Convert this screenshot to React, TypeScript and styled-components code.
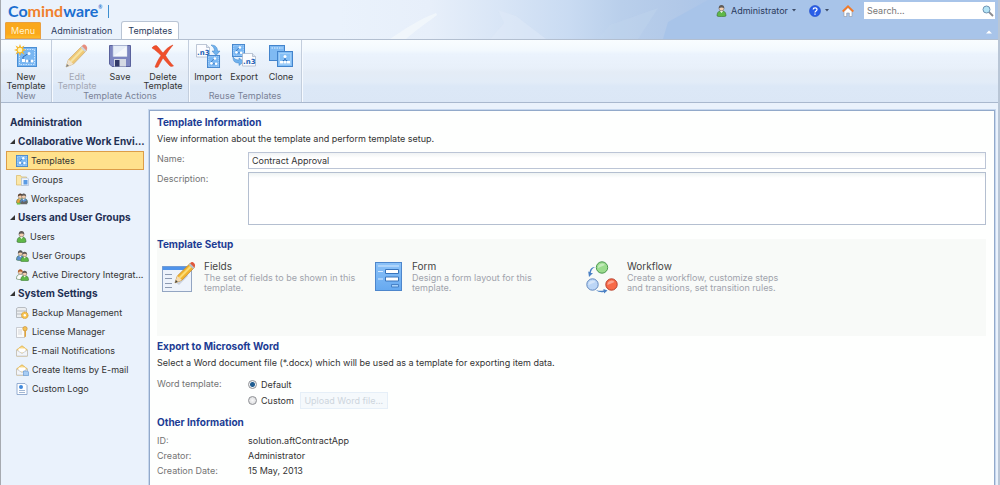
import React, { ReactNode, useState } from "react";
import styled, { createGlobalStyle } from "styled-components";

const Global = createGlobalStyle`
  * { box-sizing: border-box; }
  body { margin: 0; background: #eaf2fc; }
  body, button, input, textarea {
    font-family: Inter, Verdana, sans-serif;
    font-size: 9px;
    line-height: 11px;
    color: #333;
  }
  button { border: 0; padding: 0; background: none; cursor: pointer; }
  svg { display: block; flex: none; }
  h1, h2, h3, p, ul, dl, dd { margin: 0; padding: 0; }
`;

/* ---------- page frame ---------- */

const Page = styled.div`
  display: flex;
  flex-direction: column;
  min-height: 100vh;
  border-left: 1px solid #a6aab0;
  border-right: 2px solid #b9c6d6;
  background: #eaf2fc;
`;

const Header = styled.header`
  position: relative;
  display: flex;
  flex-direction: column;
  background: #eaf2fc;
`;

const HeaderArt = styled.svg`
  position: absolute;
  top: 0;
  right: 0;
  height: 100%;
`;

const TopBar = styled.div`
  position: relative;
  display: flex;
  justify-content: space-between;
  height: 22px;
  padding: 2px 3px 0 7px;
`;

const Brand = styled.div`
  display: flex;
  align-items: center;
  gap: 6px;
  height: 18px;
`;

const Logo = styled.a`
  display: flex;
  font-family: Lato, sans-serif;
  font-size: 16px;
  line-height: 18px;
  font-weight: 700;
  color: #1b6fd0;
  text-decoration: none;
`;

const LogoAccent = styled.span`
  color: #f0812c;
`;

const LogoMark = styled.span`
  font-size: 5px;
  line-height: 10px;
`;

const BrandRule = styled.span`
  width: 1px;
  height: 13px;
  background: #3d8fd0;
`;

const Account = styled.div`
  display: flex;
  align-items: center;
  gap: 13px;
  height: 17px;
`;

const AccountButton = styled.button`
  display: flex;
  align-items: center;
  gap: 4px;
  color: #2a3a5c;
`;

const SearchBox = styled.label`
  display: flex;
  align-items: center;
  width: 131px;
  height: 17px;
  padding: 0 1px 0 3px;
  margin-left: -3px;
  background: #fff;
`;

const SearchInput = styled.input`
  flex: 1;
  min-width: 0;
  border: 0;
  padding: 0;
  background: none;
  outline: none;
  &::placeholder { color: #777; opacity: 1; }
`;

const TabBar = styled.nav`
  position: relative;
  display: flex;
  align-items: flex-end;
  gap: 4px;
  height: 17px;
  padding: 0 6px 0 4px;
`;

const Tab = styled.button<{ $kind?: "menu" | "active" }>`
  height: 17px;
  padding: 0 6px;
  border-radius: 2px 2px 0 0;
  color: ${(p) => (p.$kind === "menu" ? "#fff4cc" : "#2c3a5c")};
  background: ${(p) =>
    p.$kind === "menu"
      ? "linear-gradient(#f9a81e, #fba81a 70%, #fdc02c)"
      : p.$kind === "active"
      ? "#fff"
      : "none"};
  box-shadow: ${(p) =>
    p.$kind === "active" ? "0 0 0 1px #b9c4d4" : p.$kind === "menu" ? "inset 0 0 0 1px #e9a040" : "none"};
`;

const TabSpacer = styled.div`
  flex: 1;
`;

const Collapse = styled.button`
  height: 17px;
  padding-top: 3px;
`;

/* ---------- ribbon ---------- */

const Ribbon = styled.div`
  position: relative;
  display: flex;
  height: 64px;
  border-top: 1px solid #b3bfd0;
  border-bottom: 1px solid #a9b8ce;
  background: linear-gradient(#f9fdff 0, #f3f9fe 10px, #ebf3fd 14px, #e8f0fa 28px, #e4ecf6 32px, #e2ecf8 42px, #dce8f7 46px, #dbe7f6 100%);
`;

const RibbonGroup = styled.section`
  display: flex;
  flex-direction: column;
  border-right: 1px solid #c3cedd;
  box-shadow: 1px 0 0 #f6faff;
`;

const RibbonTools = styled.div`
  display: flex;
  height: 49px;
  padding: 4px 1px 0;
`;

const Tool = styled.button<{ $width: number }>`
  display: flex;
  flex-direction: column;
  align-items: center;
  gap: 4px;
  width: ${(p) => p.$width}px;
  line-height: 9px;
  &:disabled { color: #a3a7b3; }
  &:disabled svg { opacity: 0.65; }
`;

const GroupName = styled.h3`
  font-size: 9px;
  line-height: 13px;
  font-weight: 400;
  text-align: center;
  color: #7a8296;
`;

/* ---------- body ---------- */

const Body = styled.div`
  display: flex;
  flex: 1;
  padding: 7px 3px 0 0;
`;

const Sidebar = styled.nav`
  width: 148px;
  padding: 3px 5px 0;
`;

const SideTitle = styled.h2`
  padding-left: 4px;
  font-size: 10px;
  line-height: 19px;
  color: #1f3054;
`;

const SideHeading = styled.button`
  display: flex;
  align-items: center;
  gap: 3px;
  width: 100%;
  height: 19px;
  padding: 0 0 0 4px;
  font-size: 10px;
  font-weight: 700;
  color: #1f3054;
`;

const Label = styled.span`
  white-space: nowrap;
`;

const SideList = styled.ul`
  list-style: none;
`;

const SideLink = styled.a<{ $active?: boolean }>`
  display: flex;
  align-items: center;
  gap: 3px;
  height: 19px;
  padding: 0 0 0 9px;
  border: 1px solid ${(p) => (p.$active ? "#dc9d48" : "transparent")};
  background: ${(p) => (p.$active ? "#ffe18c" : "none")};
  color: #333;
  text-decoration: none;
`;

const Panel = styled.main`
  flex: 1;
  min-width: 0;
  padding: 6px 8px 8px 7px;
  border: 1px solid #92a9ca;
  border-bottom: 0;
  background: #fefffe;
  box-shadow: 0 0 0 1px #c6d7ee;
`;

const Heading = styled.h2`
  font-size: 10px;
  line-height: 11px;
  color: #1c3c94;
`;

const Lead = styled.p`
  padding: 5px 0;
`;

const Field = styled.div`
  display: grid;
  grid-template-columns: 91px minmax(0, 1fr);
  margin: 3px 0;
`;

const FieldLabel = styled.label`
  padding-top: 1px;
  color: #747474;
`;

const TextInput = styled.input`
  width: 100%;
  height: 17px;
  padding: 0 3px;
  border: 1px solid #bcc5d6;
  background: linear-gradient(#f0f3f4, #fff 5px);
`;

const TextArea = styled.textarea`
  display: block;
  width: 100%;
  height: 53px;
  padding: 4px;
  border: 1px solid #b4bfd0;
  background: linear-gradient(#eef3f3, #fff 5px);
  resize: none;
`;

const Setup = styled.section`
  height: 97px;
  margin: 14px 0 5px;
  background: #f8faf8;
`;

const SetupCards = styled.div`
  display: flex;
  padding: 10px 4px 0;
`;

const Card = styled.a`
  display: flex;
  gap: 8px;
  width: 212px;
  color: #a0a3ac;
  line-height: 10px;
  text-decoration: none;
`;

const CardText = styled.span`
  display: flex;
  flex-direction: column;
  width: 156px;
`;

const CardTitle = styled.span`
  font-size: 10px;
  line-height: 13px;
  color: #444;
`;

const WordField = styled.fieldset`
  display: grid;
  grid-template-columns: 91px minmax(0, 1fr);
  margin: 0 0 9px;
  padding: 3px 0 0;
  border: 0;
`;

const FieldCaption = styled.span`
  line-height: 16px;
  color: #747474;
`;

const Choice = styled.div`
  display: flex;
  align-items: center;
  height: 16px;
`;

const RadioLabel = styled.label`
  display: flex;
  align-items: center;
  gap: 4px;
`;

const Radio = styled.input`
  appearance: none;
  width: 9px;
  height: 9px;
  margin: 0;
  border: 1px solid #8e9094;
  border-radius: 50%;
  background: radial-gradient(#f8f8f8, #d4d6d8);
  &:checked { background: radial-gradient(circle, #1f5c90 0 2px, #f2f5f8 3px); }
`;

const Upload = styled.button`
  width: 88px;
  height: 17px;
  margin-left: 6px;
  border: 1px solid #e6eff8;
  background: #f5f9fc;
  color: #cdd5dd;
`;

const Facts = styled.dl`
  display: grid;
  grid-template-columns: 91px minmax(0, 1fr);
  padding-top: 5px;
  line-height: 15px;
`;

const FactName = styled.dt`
  color: #747474;
`;

/* ---------- drawings ---------- */

const Svg = ({ w, h, box, children }: { w: number; h?: number; box: string; children: ReactNode }) => (
  <svg width={w} height={h ?? w} viewBox={box} aria-hidden="true">{children}</svg>
);

/* blue tile with a small diagram, reused by several icons; 14 units wide */
const Tile = ({ x, y, s = 1 }: { x: number; y: number; s?: number }) => (
  <g transform={`translate(${x} ${y}) scale(${s})`}>
    <rect x=".5" y=".5" width="13" height="13" fill="#79b7f3" stroke="#4384cc" />
    <rect x="1.8" y="1.8" width="10.4" height="10.4" fill="none" stroke="#d9ecff" strokeWidth=".6" strokeDasharray="1 1" />
    <path d="M8.5 3.5 5 6.5v3h4" fill="none" stroke="#2a68b4" strokeWidth=".8" />
    <circle cx="8.5" cy="3.8" r="1.4" fill="#fff" />
    <circle cx="4.8" cy="9" r="1.4" fill="#fff" />
    <circle cx="9.8" cy="9.4" r="1.4" fill="#fff" />
  </g>
);

const NewIcon = () => (
  <Svg w={24} box="0 0 24 24">
    <g transform="translate(3 3)">
      <rect x=".5" y=".5" width="19" height="19" fill="#78b6f2" stroke="#4a8ed4" />
      <rect x="2.5" y="2.5" width="15" height="15" fill="none" stroke="#dceeff" strokeDasharray="1.5 1" strokeWidth=".8" />
      <path d="M12 6 6 10v4h8" fill="none" stroke="#2e6cb8" />
      <circle cx="12" cy="6.5" r="1.5" fill="#fff" />
      <rect x="5" y="12" width="3" height="3" fill="#fff" />
      <circle cx="10" cy="14" r="1.5" fill="#fff" />
      <circle cx="15" cy="14" r="1.5" fill="#fff" />
    </g>
    <path d="M6 0l1.200 3.200L10.500 1.500 8.800 4.800 12 6 8.800 7.200l1.700 3.300-3.300-1.700L6 12 4.800 8.800 1.500 10.500l1.700-3.300L0 6l3.200-1.200L1.500 1.500l3.300 1.700z" fill="#f7b92c" />
    <circle cx="6" cy="6" r="2.300" fill="#fff6b8" />
  </Svg>
);

const Pencil = ({ transform }: { transform?: string }) => (
  <g transform={transform}>
    <path d="M1 23 3.500 15.500 17 2l4.500 4.500L8.500 20z" fill="#f2b32e" stroke="#b9822a" strokeWidth=".7" />
    <path d="M5 17 18 3.500l1.500 1.500L6.500 18.500z" fill="#fcdc74" />
    <path d="M1 23l2.500-7.500 5 4.500z" fill="#f4dcb4" />
    <path d="M1 23l1-3 2 1.800z" fill="#444" />
    <path d="M15.500 3.500 17 2l4.500 4.500L20 8z" fill="#b8c0cc" />
    <path d="M17 2c1-1.500 2.500-2 4-.5s1.500 3.500.5 5z" fill="#e0553c" />
  </g>
);

const EditIcon = () => <Svg w={24} box="0 0 24 24"><Pencil /></Svg>;

const SaveIcon = () => (
  <Svg w={24} box="0 0 24 24">
    <path d="M1.500 1.500h21v21H4l-2.500-2.500z" fill="#7d86c0" stroke="#5a629c" />
    <rect x="5" y="1.500" width="14" height="11" fill="#e6eef8" stroke="#aebbd6" strokeWidth=".6" />
    <path d="M5 12.500 19 2v10.500z" fill="#fff" opacity=".6" />
    <rect x="6" y="15" width="12" height="7.500" fill="#d4d9e4" />
    <rect x="7" y="16" width="4.500" height="6.500" fill="#323a68" />
  </Svg>
);

const DeleteIcon = () => (
  <Svg w={24} box="0 0 24 24">
    <path d="M1 4c1-2 4-3 5-2 3 3 4 5 6 7 3-4 6-6.500 10-8-3 3.500-5.500 7-7.500 10.500 2 3.500 4.500 6.500 8 10.500-1.500.5-3 .5-3.500 0-3-3-5-5.500-7-8-2 3.500-3.500 6-5 9-1 .5-2.500.5-3 0 1.500-4 3.500-8 6-11.500C7 8.500 4.500 6 1 4z" fill="#f0502c" stroke="#d83c1c" strokeWidth=".5" />
  </Svg>
);

const N3Sheet = ({ x, y }: { x: number; y: number }) => (
  <g transform={`translate(${x} ${y})`}>
    <path d="M.5.5h10l3 3v9.500H.5z" fill="#fbfcff" stroke="#a4b0c4" strokeWidth=".7" />
    <path d="M10.500.5v3h3" fill="#dbe3ef" stroke="#a4b0c4" strokeWidth=".7" />
    <text x="1" y="10.500" fontSize="7" fontWeight="700" fill="#235fb4" fontFamily="DejaVu Sans, sans-serif">.n3</text>
  </g>
);

const ImportIcon = () => (
  <Svg w={26} h={24} box="0 0 26 24">
    <N3Sheet x={1} y={0} />
    <path d="M16 1c5 0 6.500 3 6.500 6H25l-4 4.500L17 7h2.500c0-2.500-1-4-3.500-6z" fill="#6fb2ee" stroke="#3f83c6" strokeWidth=".5" />
    <Tile x={12} y={11} s={0.93} />
  </Svg>
);

const ExportIcon = () => (
  <Svg w={26} h={24} box="0 0 26 24">
    <Tile x={1} y={0} s={0.93} />
    <path d="M2 13c0 4.500 2 6 6 6v2.500L13 17.500 8 14v2c-3 0-4.500-1-6-3z" fill="#6fb2ee" stroke="#3f83c6" strokeWidth=".5" />
    <N3Sheet x={11} y={9} />
  </Svg>
);

const CloneIcon = () => (
  <Svg w={24} box="0 0 24 24">
    <rect x=".5" y="1.500" width="15" height="15" fill="#7fbaf3" stroke="#4384cc" />
    <path d="M2.500 4h11" stroke="#e4f2ff" strokeDasharray="1.500 1" />
    <rect x="8.500" y="7.500" width="15" height="15" fill="#84bff6" stroke="#4384cc" />
    <rect x="10.500" y="9.500" width="11" height="11" fill="none" stroke="#e4f2ff" strokeDasharray="1 1" strokeWidth=".6" />
    <path d="M16 12.500v3M12.500 18l3.500-2.500 3.500 2.500" fill="none" stroke="#2a68b4" />
    <circle cx="16" cy="12.500" r="1.500" fill="#fff" />
    <path d="M11 17h3v2.500h-3zM14.500 17h3v2.500h-3zM18 17h3v2.500h-3z" fill="#fff" />
  </Svg>
);

const Person = ({ x = 0, y = 0, body = "#5fb848", hair = "#5e5a58" }) => (
  <g transform={`translate(${x} ${y})`}>
    <path d="M.5 11c0-3 1-4.500 3-5h3c2 .5 3 2 3 5-2 1-7 1-9 0z" fill={body} stroke="#3c6c38" strokeWidth=".6" />
    <path d="M3.500 6 5 8l1.500-2z" fill="#fff" />
    <circle cx="5" cy="3.300" r="2.500" fill="#f4d0b0" stroke="#77695c" strokeWidth=".5" />
    <path d="M2.300 3.500C2 1 3.500 0 5 0s3 1 2.700 3.500C6.500 2 4 2 2.300 3.500z" fill={hair} />
  </g>
);

const UserIcon = () => <Svg w={11} h={12} box="0 0 10 12"><Person /></Svg>;

const PairIcon = ({ body, hair }: { body: string; hair: string }) => (
  <Svg w={13} h={12} box="0 0 15 13">
    <Person body={body} hair={hair} />
    <Person x={5} y={1.5} />
  </Svg>
);

const WorkspacesIcon = () => (
  <Svg w={12} box="0 0 14 13">
    <Person x={0} y={0} body="#e8a23c" hair="#5b4130" />
    <Person x={4} y={0} body="#5c8fd0" />
    <path d="M5 12.500 7 8l2 2 4-2v4.500z" fill="#666" />
    <path d="M1 11h4v2H1z" fill="#6cc04a" />
  </Svg>
);

const TemplatesIcon = () => <Svg w={12} box="0 0 14 14"><Tile x={0} y={0} /></Svg>;

const FolderIcon = () => (
  <Svg w={13} h={12} box="0 0 13 12">
    <path d="M.5 1.500h4l1 1.500h5v8H.5z" fill="#fbe7a8" stroke="#d8b864" strokeWidth=".7" />
    <path d="M5.500 4h6l1 1v6.500h-7z" fill="#eef4fc" stroke="#9db4d4" strokeWidth=".6" />
    <path d="M7.500 6h4v4.500h-4z" fill="#5a9be4" />
  </Svg>
);

const BackupIcon = () => (
  <Svg w={13} h={12} box="0 0 13 12">
    <path d="M.5 1.500 2 .5h7l1.500 1v9H.5z" fill="#eceef0" stroke="#a2a6ac" strokeWidth=".7" />
    <path d="M1 4h9M1 7h6" stroke="#a8acb2" strokeWidth=".8" />
    <circle cx="8.800" cy="8.300" r="3.300" fill="#f6c350" stroke="#cf8e22" strokeWidth=".7" strokeDasharray="1.500 .5" />
    <circle cx="8.800" cy="8.300" r="1.200" fill="#fff" />
  </Svg>
);

const LicenseIcon = () => (
  <Svg w={13} h={12} box="0 0 13 12">
    <path d="M.5 1.500h8v10h-8z" fill="#fbfbfb" stroke="#b9bcc2" strokeWidth=".7" />
    <path d="M2 4h4M2 6h4M2 8h4" stroke="#c4c8d0" strokeWidth=".7" />
    <circle cx="9" cy="2.700" r="2.200" fill="#f3c258" stroke="#c68a28" strokeWidth=".6" />
    <path d="M8.500 4.500h1.500v6l-1.500 1z" fill="#e3a63c" />
  </Svg>
);

const MailIcon = ({ extra }: { extra?: boolean }) => (
  <Svg w={13} h={12} box="0 0 13 12">
    <path d="M.5 5 6 .8 11.500 5v6H.5z" fill="#fbdc8c" stroke="#dca93c" strokeWidth=".8" />
    <path d="M2.500 3.500h7v4h-7z" fill="#fff" />
    <path d="M.5 11V5L6 8.500 11.500 5v6z" fill="#f3f5f9" stroke="#b4bac6" strokeWidth=".6" />
    {extra && <path d="M7.500 7h4l1 1v3.700h-5z" fill="#a8cdf4" stroke="#5a8fce" strokeWidth=".6" />}
  </Svg>
);

const LogoDocIcon = () => (
  <Svg w={13} h={12} box="0 0 13 12">
    <path d="M1 .5h8l2 2v9H1z" fill="#fdfeff" stroke="#7f9cc6" strokeWidth=".8" />
    <circle cx="5" cy="4" r="2" fill="#3f88dc" />
    <path d="M3 7.500h6M3 9.500h6" stroke="#8aa4c8" strokeWidth=".8" />
  </Svg>
);

const FieldsIcon = () => (
  <Svg w={35} h={34} box="0 0 35 34">
    <rect x="1.500" y="6.500" width="29" height="25" fill="#eef3fb" stroke="#93a5c2" />
    <rect x="1.500" y="6.500" width="29" height="3.500" fill="#4f93ea" />
    <path d="M4 14.500h7M4 18.500h7M4 23.500h7M4 27.500h7" stroke="#8d9ab0" />
    <path d="M14 22 24 12l3 4-9 9z" fill="#a8b2c4" opacity=".5" />
    <Pencil transform="translate(13 1.500) scale(.95 .93)" />
  </Svg>
);

const FormIcon = () => (
  <Svg w={31} h={34} box="0 0 31 34">
    <defs>
      <linearGradient id="form" x2="0" y2="1">
        <stop stopColor="#8cc2f8" /><stop offset="1" stopColor="#66a9f0" />
      </linearGradient>
    </defs>
    <rect x="2.500" y="2.500" width="26" height="28" fill="url(#form)" stroke="#4d86cc" />
    <path d="M5 6h21" stroke="#d6eaff" />
    <path d="M5 11.500h5M5 19h5" stroke="#d6eaff" />
    <path d="M12.500 9.500h13v4h-13zM12.500 17h13v4h-13z" fill="#fff" stroke="#3874bc" />
    <path d="M18.500 24.500h7v2.500h-7z" fill="#a8d2fb" stroke="#3874bc" strokeWidth=".8" />
  </Svg>
);

const WorkflowIcon = () => (
  <Svg w={34} box="0 0 34 34">
    <path d="M10 7c-3 1.500-4 4-4.200 6H8l-4 4-.8-5.500 1.300.5C5 9 7 6.500 10 7z" fill="#4b80c4" />
    <path d="M11 30c3 1 5 1 7.500.5V29l4 1.500-3.500 3v-1.500c-3 .5-6 0-8-2z" fill="#4b80c4" />
    <circle cx="17" cy="7.500" r="5.700" fill="#9bdc8e" stroke="#4c9850" />
    <circle cx="7.500" cy="24.500" r="5.700" fill="#bcd6f6" stroke="#6388be" />
    <circle cx="26.500" cy="24.500" r="5.700" fill="#f86a48" stroke="#b8402c" />
    <path d="M13 8a4 4 0 0 1 7-3zM3.500 25a4 4 0 0 1 7-3zM22.500 25a4 4 0 0 1 7-3z" fill="#fff" opacity=".4" />
  </Svg>
);

const Caret = () => <Svg w={4} h={3} box="0 0 4 3"><path d="M0 0h4L2 2.500z" fill="#3c4a66" /></Svg>;

const OpenMark = () => <Svg w={5} box="0 0 5 5"><path d="M5 0v5H0z" fill="#333" /></Svg>;

const HelpIcon = () => (
  <Svg w={12} box="0 0 12 12">
    <circle cx="6" cy="6" r="5.500" fill="#2a5ee8" stroke="#1f4cc8" strokeWidth=".6" />
    <path d="M4.200 4.600C4.200 2.300 8 2.300 8 4.500 8 6 6 5.900 6 7.400M6 8.500v1.300" fill="none" stroke="#fff" strokeWidth="1.300" />
  </Svg>
);

const HomeIcon = () => (
  <Svg w={12} box="0 0 12 12">
    <path d="M2 6.500 6 2.500l4 4v5H7.300V8H4.700v3.500H2z" fill="#fff" stroke="#8d95a2" strokeWidth=".6" />
    <path d="M.7 6.500 6 1.300l5.300 5.200" fill="none" stroke="#f27a28" strokeWidth="1.800" />
  </Svg>
);

const SearchIcon = () => (
  <Svg w={12} box="0 0 12 12">
    <path d="m7 7 4 4" stroke="#8a8a90" strokeWidth="1.800" />
    <circle cx="4.500" cy="4.500" r="3.500" fill="#b4e4f6" stroke="#6f94b4" />
  </Svg>
);

/* ---------- content ---------- */

type NavItem = { name: string; icon: ReactNode; active?: boolean };

const navigation: { title: string; items: NavItem[] }[] = [
  {
    title: "Collaborative Work Envi...",
    items: [
      { name: "Templates", icon: <TemplatesIcon />, active: true },
      { name: "Groups", icon: <FolderIcon /> },
      { name: "Workspaces", icon: <WorkspacesIcon /> },
    ],
  },
  {
    title: "Users and User Groups",
    items: [
      { name: "Users", icon: <UserIcon /> },
      { name: "User Groups", icon: <PairIcon body="#5c8fd0" hair="#555" /> },
      { name: "Active Directory Integrat...", icon: <PairIcon body="#fbfbfb" hair="#b4602c" /> },
    ],
  },
  {
    title: "System Settings",
    items: [
      { name: "Backup Management", icon: <BackupIcon /> },
      { name: "License Manager", icon: <LicenseIcon /> },
      { name: "E-mail Notifications", icon: <MailIcon /> },
      { name: "Create Items by E-mail", icon: <MailIcon extra /> },
      { name: "Custom Logo", icon: <LogoDocIcon /> },
    ],
  },
];

type ToolItem = { label: ReactNode; icon: ReactNode; width: number; disabled?: boolean };

const ribbon: { title: string; tools: ToolItem[] }[] = [
  { title: "New", tools: [{ label: <>New<br />Template</>, icon: <NewIcon />, width: 48 }] },
  {
    title: "Template Actions",
    tools: [
      { label: <>Edit<br />Template</>, icon: <EditIcon />, width: 48, disabled: true },
      { label: "Save", icon: <SaveIcon />, width: 38 },
      { label: <>Delete<br />Template</>, icon: <DeleteIcon />, width: 48 },
    ],
  },
  {
    title: "Reuse Templates",
    tools: [
      { label: "Import", icon: <ImportIcon />, width: 36 },
      { label: "Export", icon: <ExportIcon />, width: 36 },
      { label: "Clone", icon: <CloneIcon />, width: 38 },
    ],
  },
];

const cards = [
  { title: "Fields", text: "The set of fields to be shown in this template.", icon: <FieldsIcon /> },
  { title: "Form", text: "Design a form layout for this template.", icon: <FormIcon /> },
  { title: "Workflow", text: "Create a workflow, customize steps and transitions, set transition rules.", icon: <WorkflowIcon /> },
];

export default function App() {
  const [word, setWord] = useState("default");
  return (
    <>
      <Global />
      <Page>
        <Header>
          <HeaderArt width="660" viewBox="0 0 660 39" preserveAspectRatio="xMaxYMid slice" aria-hidden="true">
            <defs>
              <linearGradient id="sky">
                <stop stopColor="#eaf2fc" />
                <stop offset=".14" stopColor="#e7effa" />
                <stop offset=".25" stopColor="#d8e5f6" />
                <stop offset=".35" stopColor="#c9dbf2" />
                <stop offset=".43" stopColor="#b9cfeb" />
                <stop offset=".52" stopColor="#b1c8e8" />
                <stop offset=".59" stopColor="#a8c4e9" />
                <stop offset="1" stopColor="#a8c4e9" />
              </linearGradient>
            </defs>
            <rect width="660" height="39" fill="url(#sky)" />
            <path d="M52 39C68 28 82 19 98 13l1 2C90 22 78 30 68 39z" fill="#f3f8fb" opacity=".8" />
            <path d="M160 10 178 16l30 23h-56l14-16z" fill="#e0eaf7" opacity=".5" />
            <path d="M320 8 300 39h-40l12-14z" fill="#c4d6ee" opacity=".35" />
            <path d="M370 0 330 22l-5 17h335V0z" fill="#a8c4e9" />
          </HeaderArt>
          <TopBar>
            <Brand>
              <Logo href="#">Co<LogoAccent>mind</LogoAccent>ware<LogoMark>®</LogoMark></Logo>
              <BrandRule />
            </Brand>
            <Account>
              <AccountButton><UserIcon />Administrator<Caret /></AccountButton>
              <AccountButton aria-label="Help"><HelpIcon /><Caret /></AccountButton>
              <AccountButton aria-label="Home"><HomeIcon /></AccountButton>
              <SearchBox>
                <SearchInput type="search" placeholder="Search..." aria-label="Search" />
                <SearchIcon />
              </SearchBox>
            </Account>
          </TopBar>
          <TabBar>
            <Tab $kind="menu">Menu</Tab>
            <Tab>Administration</Tab>
            <Tab $kind="active">Templates</Tab>
            <TabSpacer />
            <Collapse aria-label="Collapse ribbon">
              <Svg w={6} h={4} box="0 0 6 4"><path d="M0 3.500h6L3 .5z" fill="#fff" /></Svg>
            </Collapse>
          </TabBar>
        </Header>

        <Ribbon>
          {ribbon.map((group) => (
            <RibbonGroup key={group.title}>
              <RibbonTools>
                {group.tools.map((tool, i) => (
                  <Tool key={i} $width={tool.width} disabled={tool.disabled}>
                    {tool.icon}
                    <span>{tool.label}</span>
                  </Tool>
                ))}
              </RibbonTools>
              <GroupName>{group.title}</GroupName>
            </RibbonGroup>
          ))}
        </Ribbon>

        <Body>
          <Sidebar>
            <SideTitle>Administration</SideTitle>
            {navigation.map((section) => (
              <div key={section.title}>
                <SideHeading><OpenMark /><Label>{section.title}</Label></SideHeading>
                <SideList>
                  {section.items.map((item) => (
                    <li key={item.name}>
                      <SideLink href="#" $active={item.active}>{item.icon}<Label>{item.name}</Label></SideLink>
                    </li>
                  ))}
                </SideList>
              </div>
            ))}
          </Sidebar>

          <Panel>
            <Heading>Template Information</Heading>
            <Lead>View information about the template and perform template setup.</Lead>
            <Field>
              <FieldLabel htmlFor="name">Name:</FieldLabel>
              <TextInput id="name" defaultValue="Contract Approval" />
            </Field>
            <Field>
              <FieldLabel htmlFor="description">Description:</FieldLabel>
              <TextArea id="description" />
            </Field>

            <Setup>
              <Heading>Template Setup</Heading>
              <SetupCards>
                {cards.map((card) => (
                  <Card href="#" key={card.title}>
                    {card.icon}
                    <CardText><CardTitle>{card.title}</CardTitle>{card.text}</CardText>
                  </Card>
                ))}
              </SetupCards>
            </Setup>

            <Heading>Export to Microsoft Word</Heading>
            <Lead>Select a Word document file (*.docx) which will be used as a template for exporting item data.</Lead>
            <WordField aria-label="Word template">
              <FieldCaption>Word template:</FieldCaption>
              <div>
                <Choice>
                  <RadioLabel>
                    <Radio type="radio" name="word" checked={word === "default"} onChange={() => setWord("default")} />
                    Default
                  </RadioLabel>
                </Choice>
                <Choice>
                  <RadioLabel>
                    <Radio type="radio" name="word" checked={word === "custom"} onChange={() => setWord("custom")} />
                    Custom
                  </RadioLabel>
                  <Upload disabled={word !== "custom"}>Upload Word file...</Upload>
                </Choice>
              </div>
            </WordField>

            <Heading>Other Information</Heading>
            <Facts>
              <FactName>ID:</FactName><dd>solution.aftContractApp</dd>
              <FactName>Creator:</FactName><dd>Administrator</dd>
              <FactName>Creation Date:</FactName><dd>15 May, 2013</dd>
            </Facts>
          </Panel>
        </Body>
      </Page>
    </>
  );
}
